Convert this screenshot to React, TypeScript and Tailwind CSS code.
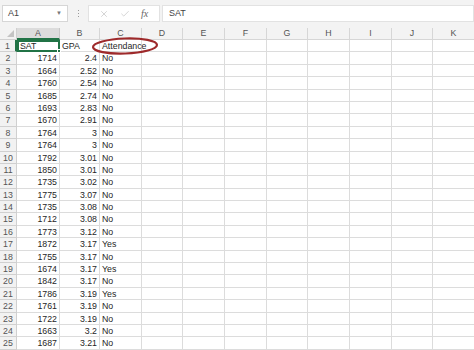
import { X, Check } from 'lucide-react';

const rows: [string, string, string][] = [
  ['1714', '2.4', 'No'],
  ['1664', '2.52', 'No'],
  ['1760', '2.54', 'No'],
  ['1685', '2.74', 'No'],
  ['1693', '2.83', 'No'],
  ['1670', '2.91', 'No'],
  ['1764', '3', 'No'],
  ['1764', '3', 'No'],
  ['1792', '3.01', 'No'],
  ['1850', '3.01', 'No'],
  ['1735', '3.02', 'No'],
  ['1775', '3.07', 'No'],
  ['1735', '3.08', 'No'],
  ['1712', '3.08', 'No'],
  ['1773', '3.12', 'No'],
  ['1872', '3.17', 'Yes'],
  ['1755', '3.17', 'No'],
  ['1674', '3.17', 'Yes'],
  ['1842', '3.17', 'No'],
  ['1786', '3.19', 'Yes'],
  ['1761', '3.19', 'No'],
  ['1722', '3.19', 'No'],
  ['1663', '3.2', 'No'],
  ['1687', '3.21', 'No'],
];

const cols = ['A', 'B', 'C', 'D', 'E', 'F', 'G', 'H', 'I', 'J', 'K'];
const gridCols =
  'grid grid-cols-[17px_43px_40px_42px_41px_42px_42px_41px_42px_42px_41px_42px]';
const cell = 'h-[12.4px] border-r border-b border-[#dcdcdc] px-[2px] leading-[12px] whitespace-nowrap';
const rowHead =
  'h-[12.4px] border-r border-b border-[#d0d0d0] bg-[#f2f2f2] text-center leading-[12px] text-[#555]';

function Row({ n, a, b, c }: { n: number; a: string; b: string; c: string }) {
  return (
    <div className={gridCols}>
      <div className={rowHead}>{n}</div>
      <div className={`${cell} text-right`}>{a}</div>
      <div className={`${cell} text-right`}>{b}</div>
      <div className={cell}>{c}</div>
      {cols.slice(3).map((k) => (
        <div key={k} className={cell} />
      ))}
    </div>
  );
}

export default function App() {
  return (
    <div className="w-[474px] h-[350px] overflow-hidden bg-white text-[8.8px] text-[#262626] font-['Liberation_Sans',Arial,sans-serif]">
      {/* formula bar */}
      <div className="h-[28px] bg-[#f3f3f3] flex items-start pt-[5px]">
        <div className="ml-[2px] w-[66px] h-[17px] bg-white border border-[#d6d6d6] flex items-center justify-between px-[5px] text-[9px] text-[#444]">
          <span>A1</span>
          <span className="text-[6px] text-[#777]">▼</span>
        </div>
        <div className="w-[20px] h-[17px] flex items-center justify-center">
          <div className="flex flex-col gap-[2px]">
            <span className="w-[1px] h-[1px] bg-[#999]" />
            <span className="w-[1px] h-[1px] bg-[#999]" />
            <span className="w-[1px] h-[1px] bg-[#999]" />
          </div>
        </div>
        <div className="w-[72px] h-[17px] bg-white border border-[#e2e2e2] flex items-center pl-[10px] gap-[11px] text-[#b0b0b0]">
          <X size={10} strokeWidth={1.3} />
          <Check size={10} strokeWidth={1.3} />
          <span className="font-['Liberation_Serif',serif] italic text-[10px] text-[#666]">fx</span>
        </div>
        <div className="ml-[2px] flex-1 h-[17px] bg-white border border-[#e2e2e2] flex items-center pl-[6px] text-[9px] text-[#444]">
          SAT
        </div>
      </div>

      {/* column headers */}
      <div className={`${gridCols} bg-[#f3f3f3]`}>
        <div className="h-[12px] border-r border-b border-[#d0d0d0] relative">
          <div className="absolute right-[2px] bottom-[2px] w-0 h-0 border-l-[7px] border-l-transparent border-b-[7px] border-b-[#c4c4c4]" />
        </div>
        {cols.map((c, i) => (
          <div
            key={c}
            className={`h-[12px] border-r border-b text-center leading-[11px] text-[#555] ${
              i === 0 ? 'bg-[#dcdcdc] border-b-[#217346] border-b-2 border-r-[#c8c8c8]' : 'border-[#d6d6d6]'
            }`}
          >
            {c}
          </div>
        ))}
      </div>

      {/* grid */}
      <div className="relative">
        <div className={gridCols}>
          <div className={`${rowHead} bg-[#dcdcdc] border-r-2 border-r-[#217346]`}>1</div>
          <div className="h-[12.4px] border-2 border-[#217346] px-[1px] leading-[9px] relative">
            SAT
            <span className="absolute -right-[3px] -bottom-[3px] w-[4px] h-[4px] bg-[#217346] border border-white" />
          </div>
          <div className={cell}>GPA</div>
          <div className={`${cell} relative z-10`}>Attendance</div>
          {cols.slice(3).map((k) => (
            <div key={k} className={cell} />
          ))}
        </div>
        {rows.map((r, i) => (
          <Row key={i} n={i + 2} a={r[0]} b={r[1]} c={r[2]} />
        ))}
        <svg className="absolute left-[90px] top-[-4px] pointer-events-none z-20" width="70" height="20" viewBox="0 0 70 20">
          <ellipse cx="35" cy="10" rx="32" ry="7.5" fill="none" stroke="#9e2a2b" strokeWidth="2.2" transform="rotate(-2 35 10)" />
        </svg>
      </div>
    </div>
  );
}
